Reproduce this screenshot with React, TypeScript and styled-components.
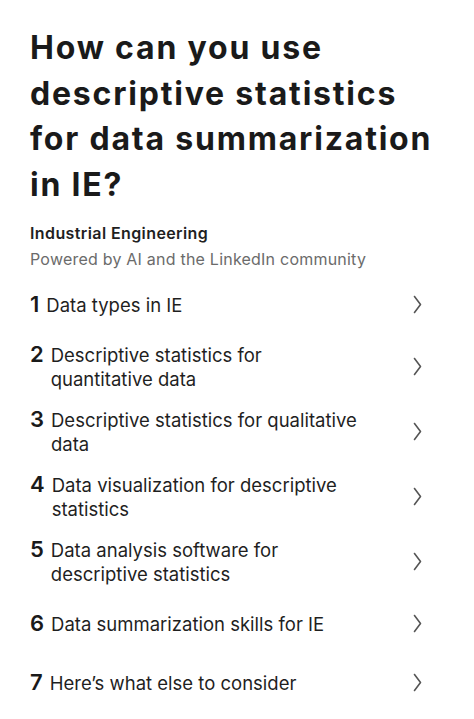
import React from "react";
import styled, { createGlobalStyle } from "styled-components";

const Global = createGlobalStyle`
  html, body { margin: 0; padding: 0; background: #ffffff; }
  body { font-family: Inter, "Noto Sans", "Liberation Sans", sans-serif; color: #1b1b1b; -webkit-font-smoothing: antialiased; }
`;

const Page = styled.main`
  width: 474px;
  min-height: 719px;
  box-sizing: border-box;
  padding: 25px 30px 0 30px;
  display: flex;
  flex-direction: column;
`;

const Title = styled.h1`
  margin: 0;
  font-size: 32px;
  line-height: 45.7px;
  font-weight: 700;
  letter-spacing: 1.8px;
  color: #1a1a1a;
`;

const Meta = styled.div`
  margin-top: 14px;
  display: flex;
  flex-direction: column;
  gap: 3px;
`;

const Topic = styled.div`
  font-size: 16px;
  line-height: 23px;
  font-weight: 600;
  letter-spacing: 0.4px;
  color: #1f1f1f;
`;

const Powered = styled.div`
  font-size: 16px;
  line-height: 23px;
  font-weight: 400;
  letter-spacing: 0.22px;
  color: #6b6b6b;
`;

const List = styled.ol`
  list-style: none;
  margin: 4px 0 0 0;
  padding: 0;
  display: flex;
  flex-direction: column;
`;

const Row = styled.li`
  display: flex;
  align-items: center;
  min-height: 59px;
  padding: 8px 0;
  box-sizing: border-box;
`;

const Label = styled.div`
  flex: 1;
  display: flex;
  align-items: baseline;
  gap: 7px;
  padding-right: 52px;
`;

const Num = styled.span`
  font-size: 22px;
  font-weight: 600;
  line-height: 24px;
  color: #1a1a1a;
`;

const Text = styled.span`
  font-size: 18.5px;
  line-height: 24px;
  font-weight: 400;
  color: #1f1f1f;
`;

const Chevron = styled.svg`
  flex: none;
  width: 9px;
  height: 19px;
  margin-right: 22px;
`;

const items = [
  "Data types in IE",
  "Descriptive statistics for quantitative data",
  "Descriptive statistics for qualitative data",
  "Data visualization for descriptive statistics",
  "Data analysis software for descriptive statistics",
  "Data summarization skills for IE",
  "Here’s what else to consider",
];

export default function App() {
  return (
    <>
      <Global />
      <Page>
        <Title>How can you use descriptive statistics for data summarization in IE?</Title>
        <Meta>
          <Topic>Industrial Engineering</Topic>
          <Powered>Powered by AI and the LinkedIn community</Powered>
        </Meta>
        <List>
          {items.map((t, i) => (
            <Row key={i}>
              <Label>
                <Num>{i + 1}</Num>
                <Text>{t}</Text>
              </Label>
              <Chevron viewBox="0 0 9 19" aria-hidden>
                <polyline points="1.5,1.5 7.5,9.5 1.5,17.5" fill="none" stroke="#555" strokeWidth="1.6" strokeLinecap="round" strokeLinejoin="round" />
              </Chevron>
            </Row>
          ))}
        </List>
      </Page>
    </>
  );
}
